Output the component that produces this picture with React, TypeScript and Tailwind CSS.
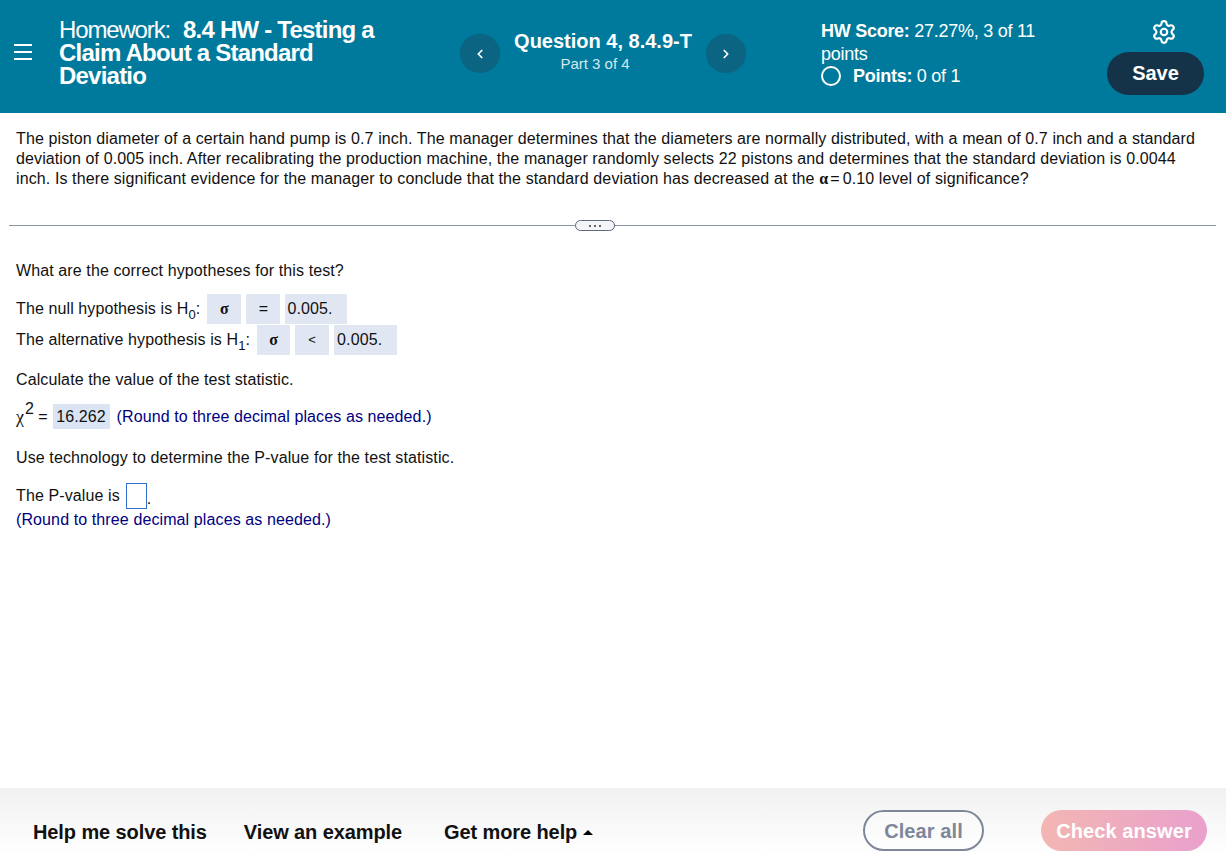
import React from "react";
import { ChevronLeft, ChevronRight, Settings } from "lucide-react";

const Box = ({ children, className = "" }: { children: React.ReactNode; className?: string }) => (
  <span className={`inline-flex items-center bg-[#e1e7f2] h-[30px] ${className}`}>{children}</span>
);

export default function App() {
  return (
    <div className="flex flex-col h-[856px] w-[1226px] overflow-hidden bg-white text-[#111] font-['Liberation_Sans',Arial,sans-serif]">
      {/* Header */}
      <header className="flex h-[113px] shrink-0 bg-[#007a9c] text-white">
        <div className="w-[59px] shrink-0 pt-[44px] pl-[14px]">
          <div className="w-[18px] space-y-[5px]">
            <div className="h-[2px] bg-white" />
            <div className="h-[2px] bg-white" />
            <div className="h-[2px] bg-white" />
          </div>
        </div>
        <div className="w-[401px] shrink-0 pt-[18px] text-[24px] leading-[23px]">
          <div className="w-[330px]">
            <span className="mr-[13px] tracking-[-1.15px]">Homework:</span>
            <span className="font-bold tracking-[-0.78px]">8.4 HW - Testing a Claim About a Standard Deviatio</span>
          </div>
        </div>
        <div className="mt-[34px] flex h-[39px] w-[40px] shrink-0 items-center justify-center rounded-full bg-[#0a6482]">
          <ChevronLeft size={14} strokeWidth={3} />
        </div>
        <div className="flex w-[206px] shrink-0 flex-col items-center pt-[29px]">
          <div className="text-[20px] font-bold leading-[24px]">Question 4, 8.4.9-T</div>
          <div className="mt-[2px] mr-[16px] text-[15px] leading-[17px] text-[#d5e8ee]">Part 3 of 4</div>
        </div>
        <div className="mt-[34px] flex h-[39px] w-[40px] shrink-0 items-center justify-center rounded-full bg-[#0a6482]">
          <ChevronRight size={14} strokeWidth={3} />
        </div>
        <div className="ml-[75px] w-[240px] shrink-0 pt-[20px] text-[18px] leading-[22.5px] tracking-[-0.27px]">
          <div className="w-[225px]">
            <span className="font-bold">HW Score:</span> 27.27%, 3 of 11 points
          </div>
          <div className="flex items-center">
            <span className="mr-[12px] h-[20px] w-[20px] rounded-full border-[2.5px] border-white" />
            <span className="font-bold">Points:</span>&nbsp;0 of 1
          </div>
        </div>
        <div className="flex flex-1 flex-col items-end pt-[19px] pr-[22px]">
          <Settings size={26} strokeWidth={2} className="mr-[27px]" />
          <div className="mt-[7px] flex h-[43px] w-[97px] items-center justify-center rounded-full bg-[#143349] pb-[1px] text-[20px] font-bold">
            Save
          </div>
        </div>
      </header>

      {/* Question stem */}
      <div className="px-[16px] pt-[16px] text-[16px] leading-[20px] tracking-[0.11px]">
        <p className="w-[1190px]">
          The piston diameter of a certain hand pump is 0.7 inch. The manager determines that the diameters are normally
          distributed, with a mean of 0.7 inch and a standard deviation of 0.005 inch. After recalibrating the production
          machine, the manager randomly selects 22 pistons and determines that the standard deviation is 0.0044 inch. Is
          there significant evidence for the manager to conclude that the standard deviation has decreased at the{" "}
          <span className="font-['Liberation_Serif',serif] font-bold">α</span>
          <span className="ml-[2px] mr-[3px]">=</span>
          <span>0.10 level of significance?</span>
        </p>
      </div>

      {/* Divider */}
      <div className="relative ml-[9px] mr-[10px] mt-[36px] h-px shrink-0 bg-[#8a93a5]">
        <div className="absolute left-[566px] top-[-5px] flex h-[11px] w-[40px] items-center justify-center gap-[3px] rounded-full border border-[#5f6b7d] bg-[#f3f5f8]">
          <span className="h-[2px] w-[2px] rounded-full bg-[#333]" />
          <span className="h-[2px] w-[2px] rounded-full bg-[#333]" />
          <span className="h-[2px] w-[2px] rounded-full bg-[#333]" />
        </div>
      </div>

      {/* Parts */}
      <div className="px-[16px] pt-[35px] text-[16px] leading-[20px] tracking-[0.11px]">
        <p>What are the correct hypotheses for this test?</p>

        <div className="mt-[13px] flex h-[30px] items-center">
          <span>
            The null hypothesis is H<sub className="bottom-[-5px] text-[13px] leading-none">0</sub>:
          </span>
          <Box className="ml-[7px] w-[34px] justify-center font-['Liberation_Serif',serif] font-bold">σ</Box>
          <Box className="ml-[5px] w-[34px] justify-center">=</Box>
          <Box className="ml-[5px] w-[62px] pl-[2px]">0.005.</Box>
        </div>
        <div className="mt-[1px] flex h-[30px] items-center">
          <span>
            The alternative hypothesis is H<sub className="bottom-[-5px] text-[13px] leading-none">1</sub>:
          </span>
          <Box className="ml-[7px] w-[33px] justify-center font-['Liberation_Serif',serif] font-bold">σ</Box>
          <Box className="ml-[5px] w-[34px] justify-center text-[13px]">&lt;</Box>
          <Box className="ml-[5px] w-[63px] pl-[3px]">0.005.</Box>
        </div>

        <p className="mt-[15px]">Calculate the value of the test statistic.</p>

        <div className="mt-[14px] flex h-[25px] items-center">
          <span className="font-['Liberation_Serif',serif] text-[18px]">χ</span>
          <sup className="ml-[1px] text-[16px] leading-none">2</sup>
          <span className="ml-[4px]">=</span>
          <span className="ml-[5px] inline-flex h-[25px] w-[57px] items-center justify-center bg-[#dbe4f2]">16.262</span>
          <span className="ml-[7px] text-[#000080]">(Round to three decimal places as needed.)</span>
        </div>

        <p className="mt-[19px]">Use technology to determine the P-value for the test statistic.</p>

        <div className="mt-[15px] flex h-[26px] items-center">
          <span>The P-value is</span>
          <span className="ml-[6px] h-[26px] w-[21px] border border-[#2f6fd0]" />
          <span className="self-end leading-[20px]">.</span>
        </div>
        <p className="mt-[1px] text-[#000080]">
          (Round to three decimal places as needed.)
        </p>
      </div>

      {/* Footer */}
      <footer className="mt-auto flex h-[68px] shrink-0 items-center bg-gradient-to-b from-[#f1f1f1] to-white text-[20px] font-bold">
        <div className="ml-[33px] mt-[20px] flex items-center tracking-[-0.1px]">
          <span>Help me solve this</span>
          <span className="ml-[37px]">View an example</span>
          <span className="ml-[42px]">Get more help</span>
          <span className="ml-[6px] h-0 w-0 border-x-[5px] border-b-[5px] border-x-transparent border-b-black" />
        </div>
        <div className="ml-auto mr-[19px] mt-[22px] flex items-center gap-[57px] self-start tracking-[0.1px]">
          <div className="flex h-[41px] w-[121px] items-center justify-center rounded-full border-[2px] border-[#7e8799] bg-white/30 text-[#7e8799]">
            Clear all
          </div>
          <div className="flex h-[41px] w-[166px] items-center justify-center rounded-full bg-gradient-to-r from-[#f3b6b2] to-[#e9a0cc] text-white">
            Check answer
          </div>
        </div>
      </footer>
    </div>
  );
}
